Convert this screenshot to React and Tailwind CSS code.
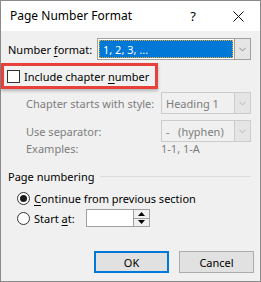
import { ChevronDown } from 'lucide-react'

const FONT = "font-['Segoe_UI','Noto_Sans',sans-serif]"

function Combo({ value, disabled = false, focused = false, width }) {
  return (
    <div
      className={`flex h-[22px] border ${disabled ? 'border-[#cccccc] bg-[#f0f0f0] text-[#7d7d7d]' : 'border-[#a0a0a0] bg-white text-black'}`}
      style={{ width }}
    >
      <div className="flex-1 p-[1px] min-w-0">
        {focused ? (
          <div className="h-full bg-[#0078d7] text-white border border-dotted border-[#f5a623] flex items-center pl-[3px] leading-none whitespace-nowrap">
            {value}
          </div>
        ) : (
          <div className="h-full flex items-center pl-[3px] leading-none whitespace-pre">{value}</div>
        )}
      </div>
      <div
        className={`w-[16px] flex items-center justify-center border-l ${disabled ? 'border-[#cccccc] bg-[#e5e5e5] text-[#a0a0a0]' : 'border-[#a0a0a0] bg-[#e5e5e5] text-[#606060]'}`}
      >
        <ChevronDown size={11} strokeWidth={1.5} />
      </div>
    </div>
  )
}

function Radio({ checked }) {
  return (
    <div className="w-[13px] h-[13px] shrink-0 rounded-full border border-[#333333] bg-white flex items-center justify-center">
      {checked && <div className="w-[7px] h-[7px] rounded-full bg-[#1a1a1a]" />}
    </div>
  )
}

export default function App() {
  return (
    <div className={`w-[261px] h-[282px] border border-[#8a8a8a] bg-[#f0f0f0] text-[11px] text-black whitespace-nowrap ${FONT} flex flex-col`}>
      {/* Title bar */}
      <div className="h-[30px] bg-white flex items-center pl-[9px]">
        <span className="text-[12px] leading-none">Page Number Format</span>
        <span className="ml-auto w-[10px] text-[13px] leading-none text-center">?</span>
        <div className="ml-[35px] mr-[16px] w-[11px] h-[11px]">
          <svg width="11" height="11" viewBox="0 0 11 11">
            <path d="M0.5 0.5 L10.5 10.5 M10.5 0.5 L0.5 10.5" stroke="#111" strokeWidth="1" fill="none" />
          </svg>
        </div>
      </div>

      {/* Number format */}
      <div className="mt-[7px] h-[22px] flex items-center pl-[7px]">
        <span className="w-[89px] leading-none">
          Number <u className="underline-offset-2">f</u>ormat:
        </span>
        <Combo value="1, 2, 3, ..." focused width={154} />
      </div>

      {/* Include chapter number (highlighted) */}
      <div className="mt-[3px] w-[157px] h-[26px] border-[3px] border-[#e8413c] shadow-[0_2px_3px_rgba(0,0,0,0.25)] flex items-center pl-[3px]">
        <div className="w-[13px] h-[13px] shrink-0 border border-[#333333] bg-white" />
        <span className="ml-[4px] leading-none">
          Include chapter <u className="underline-offset-2">n</u>umber
        </span>
      </div>

      {/* Chapter starts with style */}
      <div className="mt-[3px] h-[22px] flex items-center pl-[25px] text-[#7d7d7d]">
        <span className="w-[135px] leading-none">Chapter starts with style:</span>
        <Combo value="Heading 1" disabled width={90} />
      </div>

      {/* Use separator */}
      <div className="mt-[6px] h-[22px] flex items-center pl-[25px] text-[#7d7d7d]">
        <span className="w-[135px] leading-none">Use separator:</span>
        <Combo value={'-   (hyphen)'} disabled width={90} />
      </div>

      {/* Examples */}
      <div className="h-[12px] flex items-center pl-[25px] text-[#7d7d7d]">
        <span className="w-[135px] leading-none">Examples:</span>
        <span className="leading-none">1-1, 1-A</span>
      </div>

      {/* Page numbering group */}
      <div className="mt-[14px] h-[16px] flex items-center pl-[7px] pr-[9px]">
        <span className="leading-none">Page numbering</span>
        <div className="flex-1 ml-[6px] h-px bg-[#dcdcdc]" />
      </div>

      <div className="mt-[6px] h-[16px] flex items-center pl-[16px]">
        <Radio checked />
        <span className="ml-[4px] leading-none">
          <u className="underline-offset-2">C</u>ontinue from previous section
        </span>
      </div>

      <div className="mt-[3px] h-[18px] flex items-center pl-[16px]">
        <Radio />
        <span className="ml-[4px] w-[52px] leading-none">
          Start <u className="underline-offset-2">a</u>t:
        </span>
        <div className="w-[64px] h-[18px] border border-[#a0a0a0] bg-white flex justify-end">
          <div className="w-[16px] h-full border-l border-[#a0a0a0] flex flex-col">
            <div className="flex-1 bg-[#f0f0f0] border-b border-[#a0a0a0] flex items-center justify-center">
              <svg width="7" height="4" viewBox="0 0 7 4"><path d="M3.5 0 L7 4 L0 4 Z" fill="#000" /></svg>
            </div>
            <div className="flex-1 bg-[#f0f0f0] flex items-center justify-center">
              <svg width="7" height="4" viewBox="0 0 7 4"><path d="M0 0 L7 0 L3.5 4 Z" fill="#000" /></svg>
            </div>
          </div>
        </div>
      </div>

      {/* Buttons */}
      <div className="mt-auto mb-[8px] flex justify-end gap-[10px] pr-[6px]">
        <button className="w-[75px] h-[22px] border-2 border-[#0078d7] bg-[#e1e1e1] leading-none">OK</button>
        <button className="w-[75px] h-[22px] border border-[#adadad] bg-[#e1e1e1] leading-none">Cancel</button>
      </div>
    </div>
  )
}
